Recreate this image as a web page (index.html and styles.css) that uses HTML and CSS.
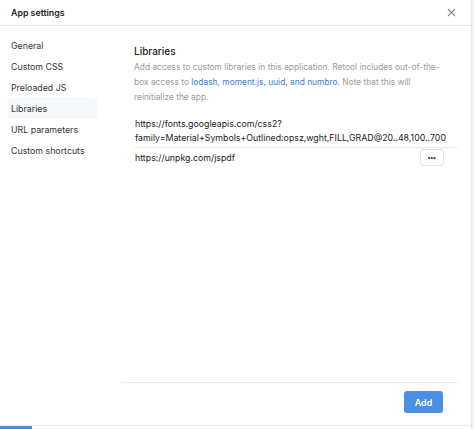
FILE: index.html
```html
<!DOCTYPE html>
<html lang="en">
<head>
    <meta charset="UTF-8">
    <title>App settings</title>
    <link rel="stylesheet" href="styles.css">
</head>
<body>
    <div class="modal">
        <!-- Header -->
        <div class="modal-header">
            <span class="modal-title">App settings</span>
            <span class="close-btn">
                <svg width="9" height="9" viewBox="0 0 9 9"><path d="M1 1 L8 8 M8 1 L1 8" stroke="#8a8a8a" stroke-width="1.1" fill="none"/></svg>
            </span>
        </div>

        <div class="modal-body">
            <!-- Sidebar menu -->
            <ul class="side-menu">
                <li>General</li>
                <li>Custom CSS</li>
                <li>Preloaded JS</li>
                <li class="active">Libraries</li>
                <li>URL parameters</li>
                <li>Custom shortcuts</li>
            </ul>

            <!-- Libraries section -->
            <div class="content">
                <div class="section">
                    <h2>Libraries</h2>
                    <p class="desc">Add access to custom libraries in this application. Retool includes out-of-the-box access to <a href="#">lodash, moment.js, uuid, and numbro.</a> Note that this will reinitialize the app.</p>

                    <div class="lib-list">
                        <div class="lib-row">
                            <span class="lib-url">https://fonts.googleapis.com/css2?<br>family=Material+Symbols+Outlined:opsz,wght,FILL,GRAD@20..48,100..700</span>
                        </div>
                        <div class="lib-row">
                            <span class="lib-url">https://unpkg.com/jspdf</span>
                            <button class="more-btn">&bull;&bull;&bull;</button>
                        </div>
                    </div>
                </div>

                <div class="footer">
                    <button class="add-btn">Add</button>
                </div>
            </div>
        </div>

        <div class="bottom-bar"><span class="bottom-progress"></span></div>
    </div>
</body>
</html>
```

FILE: styles.css
```css
body {
    margin: 0;
    font-family: Inter, "Noto Sans", sans-serif;
    background-color: #f4f4f4;
    color: #222;
}

.modal {
    width: 471px;
    height: 429px;
    background-color: #fff;
    border-right: 1px solid #e6e6e6;
    display: flex;
    flex-direction: column;
}

.modal-header {
    height: 25px;
    border-bottom: 1px solid #e8e8e8;
    display: flex;
    align-items: center;
    justify-content: space-between;
    padding: 0 15px 0 11px;
}

.modal-title {
    font-size: 8.8px;
    font-weight: 600;
    color: #222;
}

.close-btn {
    display: flex;
}

.modal-body {
    flex: 1;
    display: flex;
    min-height: 0;
}

.side-menu {
    list-style: none;
    margin: 0;
    padding: 9px 0 0 8px;
    width: 113px;
    flex-shrink: 0;
    box-sizing: border-box;
}

.side-menu li {
    width: 89px;
    height: 21px;
    line-height: 21px;
    padding-left: 3px;
    box-sizing: border-box;
    font-size: 8.8px;
    color: #333;
    border-radius: 3px;
}

.side-menu li.active {
    background-color: #f4f7fb;
}

.content {
    flex: 1;
    min-width: 0;
    display: flex;
    flex-direction: column;
    padding: 0 13px 0 8px;
}

.section {
    flex: 1;
    padding: 16px 0 0 13px;
}

h2 {
    margin: 0;
    font-size: 10px;
    font-weight: 500;
    line-height: 18px;
    color: #222;
}

.desc {
    margin: 0;
    font-size: 8.4px;
    line-height: 15px;
    color: #9a9a9a;
    width: 312px;
}

.desc a {
    color: #3b7dd8;
    text-decoration: none;
}

.lib-list {
    margin-top: 12px;
}

.lib-row {
    display: flex;
    align-items: center;
    justify-content: space-between;
    padding: 0 14px 0 1px;
    font-size: 8.8px;
    line-height: 14px;
    color: #222;
}

.lib-row:first-child {
    padding-bottom: 2px;
    border-bottom: 1px solid #ececec;
}

.lib-row:last-child {
    padding-top: 1px;
}

.more-btn {
    width: 24px;
    height: 17px;
    padding: 0;
    border: 1px solid #e2e2e2;
    border-radius: 3px;
    background-color: #fff;
    color: #333;
    font-size: 7px;
    font-weight: bold;
    letter-spacing: 0.3px;
    line-height: 15px;
}

.footer {
    border-top: 1px solid #ececec;
    height: 43px;
    box-sizing: border-box;
    display: flex;
    align-items: flex-start;
    justify-content: flex-end;
    padding: 8px 15px 0 0;
}

.add-btn {
    width: 39px;
    height: 22px;
    border: none;
    border-radius: 3px;
    background-color: #4a8fe4;
    color: #fff;
    font-family: Inter, "Noto Sans", sans-serif;
    font-size: 9px;
    font-weight: 600;
    padding: 0;
}

.bottom-bar {
    height: 3px;
    border-top: 1px solid #ececec;
    display: flex;
}

.bottom-progress {
    width: 32px;
    background-color: #4a8fe4;
}
```
